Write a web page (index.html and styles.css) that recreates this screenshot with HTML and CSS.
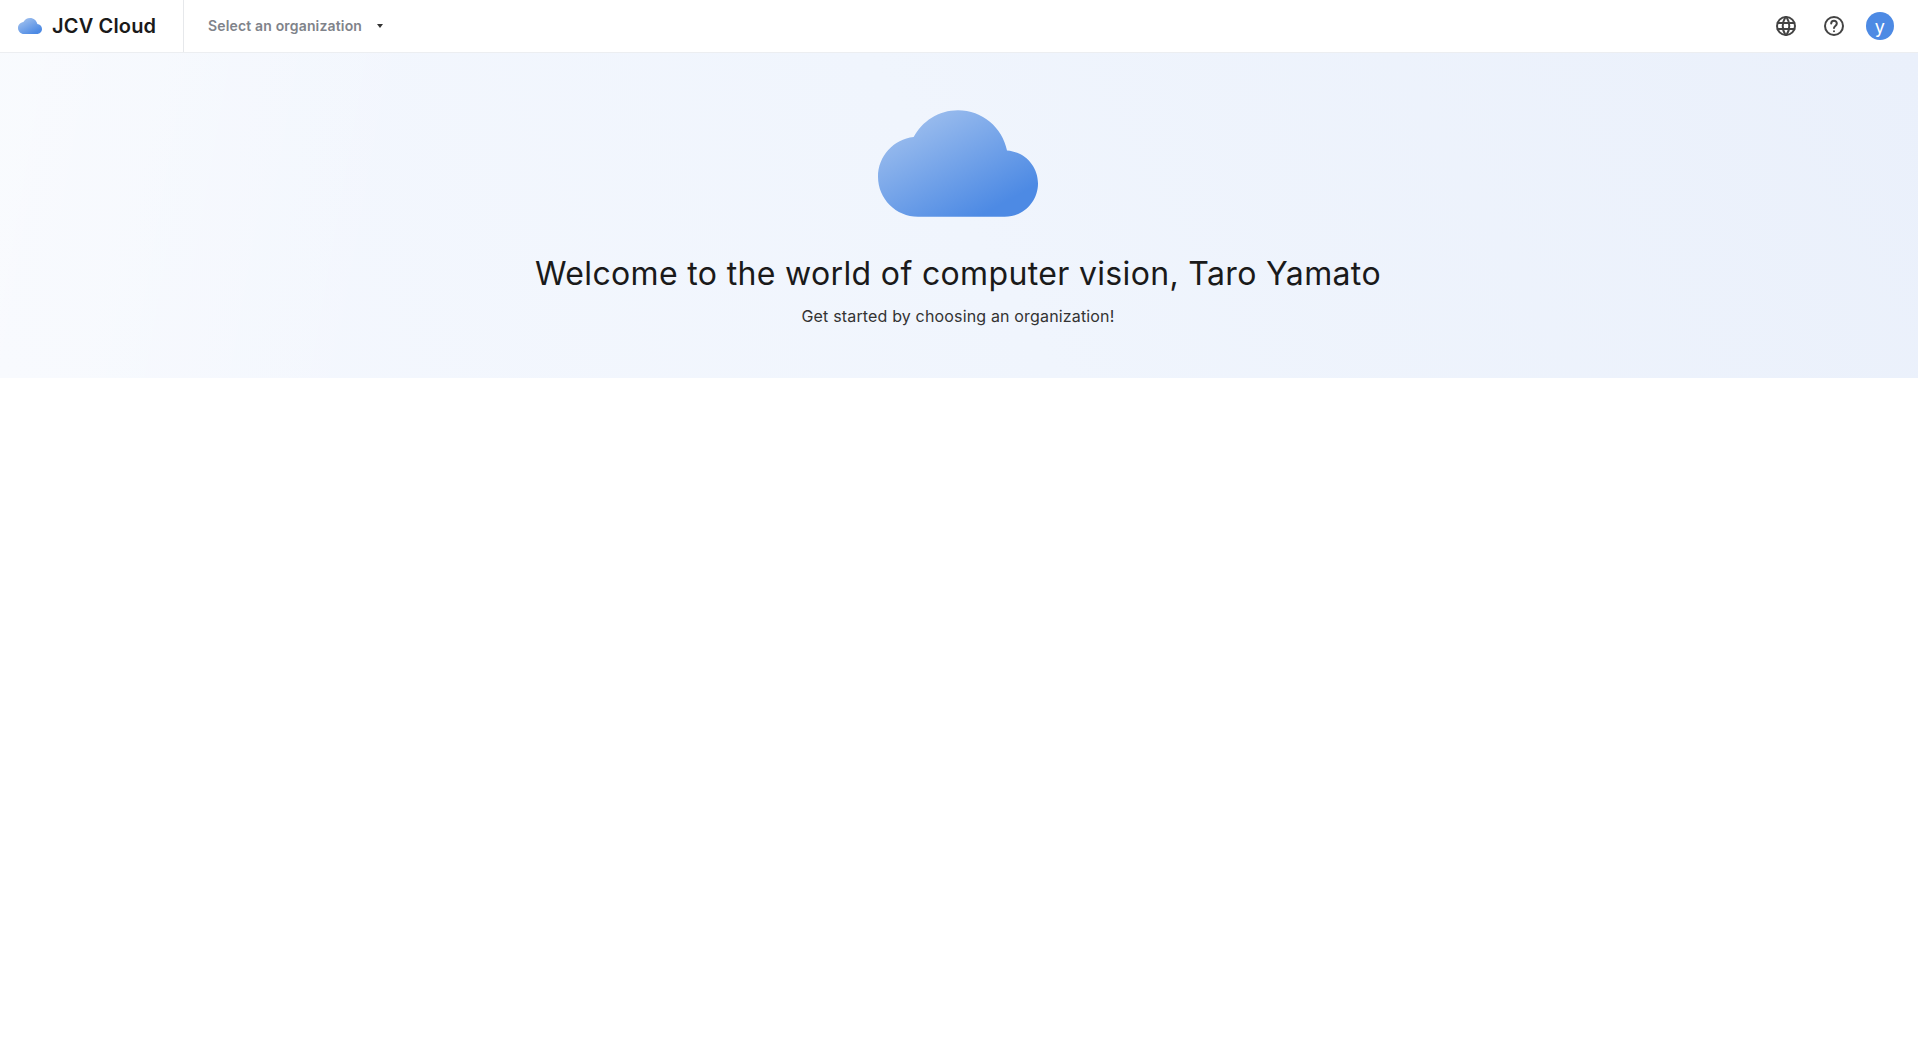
FILE: index.html
```html
<!DOCTYPE html>
<html lang="en">

<head>
  <meta charset="UTF-8">
  <meta name="viewport" content="width=device-width, initial-scale=1.0">
  <title>JCV Cloud</title>
  <link rel="stylesheet" href="styles.css">
</head>

<body>

  <header class="navbar">
    <div class="brand">
      <svg class="brand-icon" viewBox="0 4 24 16">
        <defs>
          <linearGradient id="cloudSmall" x1="0.05" y1="0.05" x2="0.75" y2="0.9">
            <stop offset="0" stop-color="#a6c4ef"></stop>
            <stop offset="1" stop-color="#4d8ae4"></stop>
          </linearGradient>
        </defs>
        <path fill="url(#cloudSmall)" d="M19.35 10.04C18.67 6.59 15.64 4 12 4 9.11 4 6.6 5.64 5.35 8.04 2.34 8.36 0 10.91 0 14c0 3.31 2.69 6 6 6h13c2.76 0 5-2.24 5-5 0-2.64-2.05-4.78-4.65-4.96z"></path>
      </svg>
      <span class="brand-name">JCV Cloud</span>
    </div>

    <div class="org-select">
      <span class="org-label">Select an organization</span>
      <span class="org-caret"></span>
    </div>

    <div class="nav-actions">
      <svg class="nav-icon" viewBox="0 0 24 24">
        <circle cx="12" cy="12" r="9"></circle>
        <path d="M3.6 9h16.8M3.6 15h16.8"></path>
        <path d="M11.5 3a17 17 0 0 0 0 18M12.5 3a17 17 0 0 1 0 18"></path>
      </svg>
      <svg class="nav-icon" viewBox="0 0 24 24">
        <circle cx="12" cy="12" r="9"></circle>
        <path d="M12 17.2v.01M12 14c0-2 2.8-2.2 2.8-4.5a2.8 2.8 0 0 0-5.6 0"></path>
      </svg>
      <div class="avatar">y</div>
    </div>
  </header>

  <section class="hero">
    <svg class="hero-icon" viewBox="0 4 24 16">
      <defs>
        <linearGradient id="cloudBig" x1="0.05" y1="0.05" x2="0.75" y2="0.9">
          <stop offset="0" stop-color="#a6c4ef"></stop>
          <stop offset="1" stop-color="#4d8ae4"></stop>
        </linearGradient>
      </defs>
      <path fill="url(#cloudBig)" d="M19.35 10.04C18.67 6.59 15.64 4 12 4 9.11 4 6.6 5.64 5.35 8.04 2.34 8.36 0 10.91 0 14c0 3.31 2.69 6 6 6h13c2.76 0 5-2.24 5-5 0-2.64-2.05-4.78-4.65-4.96z"></path>
    </svg>
    <h1>Welcome to the world of computer vision, Taro Yamato</h1>
    <p>Get started by choosing an organization!</p>
  </section>

</body>

</html>
```

FILE: styles.css
```css
body {
  font-family: Inter, 'Noto Sans', sans-serif;
  letter-spacing: 0.01em;
  background-color: #fff;
  color: #1a1a1a;
  margin: 0;
}

.navbar {
  display: flex;
  align-items: stretch;
  height: 52px;
  background-color: #fff;
  border-bottom: 1px solid #eceef1;
  box-shadow: 0 1px 2px rgba(0, 0, 0, 0.02);
}

.brand {
  display: flex;
  align-items: center;
  gap: 10px;
  width: 184px;
  padding-left: 18px;
  box-sizing: border-box;
  border-right: 1px solid #e6e8eb;
}

.brand-icon {
  width: 24px;
  height: 16px;
}

.brand-name {
  font-size: 20px;
  font-weight: 600;
  color: #1a1a1a;
}

.org-select {
  display: flex;
  align-items: center;
  margin-left: 24px;
  padding-bottom: 1px;
}

.org-label {
  font-size: 14px;
  font-weight: 600;
  color: #7f838a;
}

.org-caret {
  width: 0;
  height: 0;
  margin-left: 15px;
  border-left: 3px solid transparent;
  border-right: 3px solid transparent;
  border-top: 4px solid #333;
}

.nav-actions {
  display: flex;
  align-items: center;
  gap: 24px;
  margin-left: auto;
  padding-right: 24px;
}

.nav-icon {
  width: 24px;
  height: 24px;
  fill: none;
  stroke: #444;
  stroke-width: 2;
  stroke-linecap: round;
  stroke-linejoin: round;
}

.avatar {
  width: 28px;
  height: 28px;
  border-radius: 50%;
  margin-left: -4px;
  background-color: #4d8ae4;
  color: #fff;
  font-size: 18px;
  display: flex;
  align-items: center;
  justify-content: center;
}

.hero {
  display: flex;
  flex-direction: column;
  align-items: center;
  height: 325px;
  padding-top: 57px;
  padding-right: 2px;
  box-sizing: border-box;
  background:
    linear-gradient(100deg, rgba(255, 255, 255, 0.4) 0%, rgba(255, 255, 255, 0) 22%),
    linear-gradient(60deg, #f5f8fe 0%, #f0f5fd 50%, #eaf0fb 100%);
}

.hero-icon {
  width: 160px;
  height: 107px;
}

h1 {
  font-size: 32px;
  font-weight: 400;
  line-height: 40px;
  margin: 37px 0 0;
  letter-spacing: 0.345px;
  color: #1a1a1a;
}

p {
  font-size: 16px;
  line-height: 24px;
  margin: 10px 0 0;
  color: #333;
}
```
